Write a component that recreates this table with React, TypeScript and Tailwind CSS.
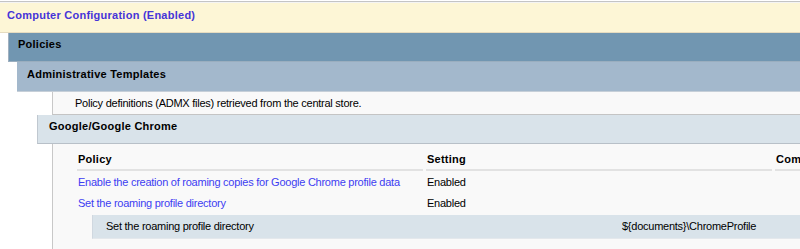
import React from "react";

export default function App() {
  return (
    <div className="w-[800px] h-[249px] overflow-hidden bg-white text-[11px] text-black tracking-[-0.25px]" style={{ fontFamily: '"Liberation Sans", Arial, sans-serif' }}>
      <div className="h-px bg-white" />
      <div className="h-px bg-[#c4c4c4]" />
      <div className="h-px bg-[#f4f4f4]" />
      <div className="h-[30px] bg-[#fdf6d6] border-b border-[#e6dcc0] flex items-center pl-[7px] pb-[4px]">
        <span className="font-bold text-[#4634d8] tracking-[0.25px]">Computer Configuration (Enabled)</span>
      </div>
      <div className="ml-[8px] h-[29px] bg-[#7196b1] border-b border-[#9aaebf] border-l border-l-[#a0b0c0] flex items-center pl-[9px] pb-[6px]">
        <span className="font-bold tracking-[0.25px]">Policies</span>
      </div>
      <div className="ml-[17px] h-[30px] bg-[#a3b8cc] border-b border-[#c6cfd8] flex items-center pl-[10px] pb-[5px]">
        <span className="font-bold tracking-[0.25px]">Administrative Templates</span>
      </div>
      <div className="ml-[52px] h-[23px] bg-[#f9f9f9] border-l border-[#c8c8c8] border-b border-b-[#c4c4c4] flex items-center pl-[22px]">
        <span>Policy definitions (ADMX files) retrieved from the central store.</span>
      </div>
      <div className="ml-[37px] h-[29px] bg-[#d9e3ea] border-l border-[#c0c8d0] border-b border-b-[#b8c0c8] flex items-center pl-[11px] pb-[6px]">
        <span className="font-bold tracking-[0.25px]">Google/Google Chrome</span>
      </div>
      <div className="ml-[52px] h-[120px] bg-[#f9f9f9] border-l border-[#c8c8c8] pt-[5px]">
        <div className="ml-[24px] flex h-[22px] items-center">
          <div className="w-[346px] shrink-0 h-full flex items-center pl-px border-b-2 border-[#e2e2e2] mr-[3px]">
            <span className="font-bold tracking-[0.25px]">Policy</span>
          </div>
          <div className="w-[346px] shrink-0 h-full flex items-center pl-px border-b-2 border-[#e2e2e2] mr-[3px]">
            <span className="font-bold tracking-[0.25px]">Setting</span>
          </div>
          <div className="flex-1 min-w-0 overflow-hidden h-full flex items-center pl-px border-b-2 border-[#e2e2e2]">
            <span className="font-bold whitespace-nowrap tracking-[0.25px]">Comment</span>
          </div>
        </div>
        <div className="ml-[24px] mt-px flex h-[21px] items-center">
          <div className="w-[349px] shrink-0 pl-px text-[#3d3df2] whitespace-nowrap">Enable the creation of roaming copies for Google Chrome profile data</div>
          <div className="pl-px">Enabled</div>
        </div>
        <div className="ml-[24px] flex h-[21px] items-center">
          <div className="w-[349px] shrink-0 pl-px text-[#3d3df2] whitespace-nowrap">Set the roaming profile directory</div>
          <div className="pl-px">Enabled</div>
        </div>
        <div className="ml-[39px] mt-[1px] h-[24px] bg-[#d9e3ea] border-b border-[#e4e8ec] border-l border-l-[#d0d8e0] flex items-center">
          <div className="w-[529px] shrink-0 pl-[13px] whitespace-nowrap">Set the roaming profile directory</div>
          <div className="whitespace-nowrap">{"${documents}\\ChromeProfile"}</div>
        </div>
      </div>
    </div>
  );
}
